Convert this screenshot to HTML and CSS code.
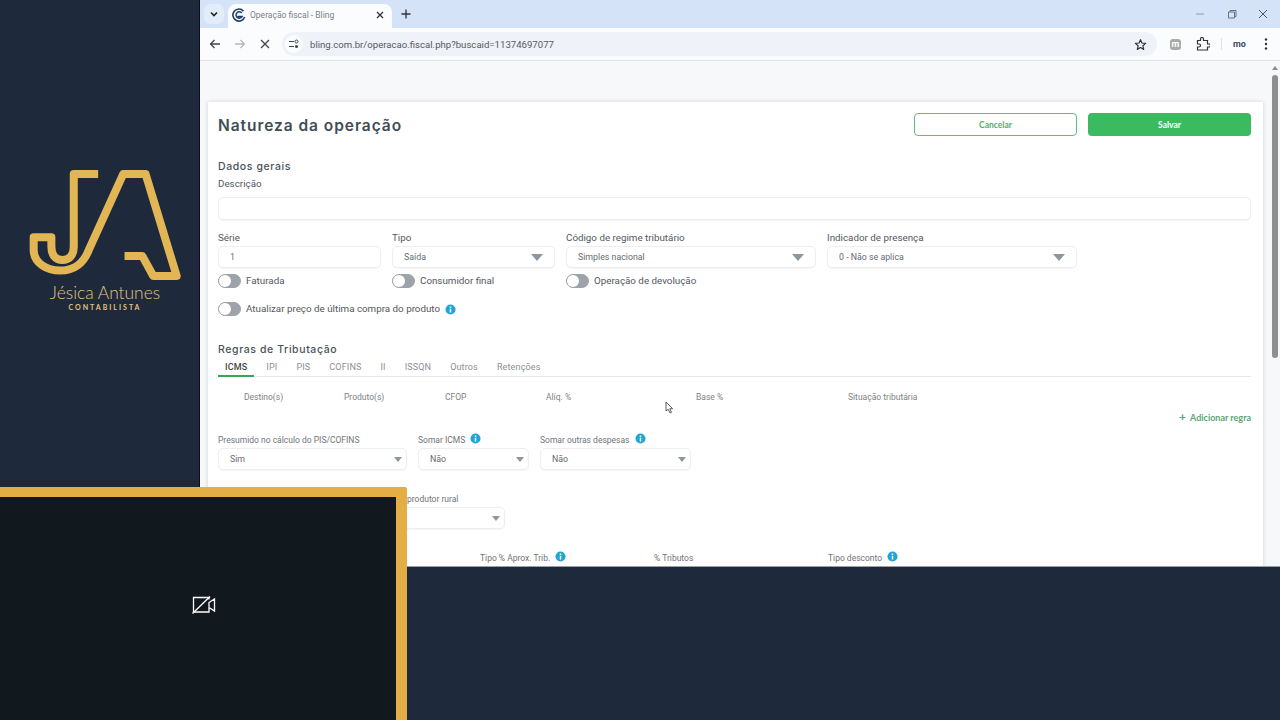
FILE: index.html
```html
<!DOCTYPE html>
<html lang="pt-BR">
<head>
    <meta charset="UTF-8">
    <title>Operação fiscal - Bling</title>
    <link rel="stylesheet" href="styles.css">
</head>
<body>
    <aside class="sidebar">
        <svg class="logo-mark" viewBox="80 55 470 335">
            <path d="M293 73H220V290C220 318 205 330 186 330C165 330 153 315 153 290V262H100V300C100 340 140 362 180 362C220 362 250 340 265 300L368 73H435L528 378H458L425 318H372" fill="none" stroke="#e3b655" stroke-width="24" stroke-linejoin="round"/>
        </svg>
        <div class="logo-name">Jésica Antunes</div>
        <div class="logo-sub">CONTABILISTA</div>
    </aside>

    <div class="browser">
        <div class="tabstrip">
            <div class="tab-menu">
                <svg width="10" height="10" viewBox="0 0 10 10"><path d="M2 3.5L5 6.5L8 3.5" fill="none" stroke="#222" stroke-width="1.6"/></svg>
            </div>
            <div class="tab">
                <svg class="favicon" width="14" height="14" viewBox="0 0 14 14">
                    <path d="M11.5 3.2A6 6 0 1 0 12.6 9" fill="none" stroke="#1d3f66" stroke-width="1.6"/>
                    <path d="M9.8 5A3.2 3.2 0 1 0 10 8.6H5.6" fill="none" stroke="#1d3f66" stroke-width="1.5"/>
                </svg>
                <span class="tab-title">Operação fiscal - Bling</span>
                <svg width="10" height="10" viewBox="0 0 10 10"><path d="M2 2L8 8M8 2L2 8" stroke="#333" stroke-width="1.3"/></svg>
            </div>
            <svg class="new-tab" width="12" height="12" viewBox="0 0 12 12"><path d="M6 1.5V10.5M1.5 6H10.5" stroke="#333" stroke-width="1.3"/></svg>
            <div class="window-controls">
                <svg width="12" height="12" viewBox="0 0 12 12"><path d="M2 6H10" stroke="#8d99a8" stroke-width="1"/></svg>
                <svg width="12" height="12" viewBox="0 0 12 12"><path d="M2.5 4H8.500V10H2.5ZM4 4V2.500H10V8.500H8.500" fill="none" stroke="#67727f" stroke-width="1"/></svg>
                <svg width="12" height="12" viewBox="0 0 12 12"><path d="M2 2L10 10M10 2L2 10" stroke="#4c5662" stroke-width="1"/></svg>
            </div>
        </div>

        <div class="toolbar">
            <svg width="12" height="12" viewBox="0 0 12 12"><path d="M11 6H1.500M5.500 2L1.500 6L5.500 10" fill="none" stroke="#444" stroke-width="1.300"/></svg>
            <svg width="12" height="12" viewBox="0 0 12 12"><path d="M1 6H10.500M6.500 2L10.500 6L6.500 10" fill="none" stroke="#b5b8bc" stroke-width="1.300"/></svg>
            <svg width="12" height="12" viewBox="0 0 12 12"><path d="M2 2L10 10M10 2L2 10" stroke="#444" stroke-width="1.300"/></svg>
            <div class="address-bar">
                <div class="site-icon">
                    <svg width="12" height="12" viewBox="0 0 12 12"><path d="M1 3.500H6M1 8.500H6" stroke="#444" stroke-width="1.200"/><circle cx="8.500" cy="3.500" r="1.500" fill="none" stroke="#444"/><circle cx="8.500" cy="8.500" r="1.500" fill="#444"/></svg>
                </div>
                <span class="url">bling.com.br/operacao.fiscal.php?buscaid=11374697077</span>
                <svg class="star" width="13" height="13" viewBox="0 0 24 24"><path d="M12 3L14.700 9.200L21.500 9.900L16.400 14.400L17.900 21L12 17.600L6.100 21L7.600 14.400L2.500 9.900L9.300 9.200Z" fill="none" stroke="#333" stroke-width="2.200" stroke-linejoin="round"/></svg>
            </div>
            <div class="toolbar-icons">
                <div class="ext-m">m</div>
                <svg width="14" height="14" viewBox="0 0 14 14"><path d="M1.500 3.500H4.500V2A1.500 1.500 0 0 1 7.500 2V3.500H11.500V7H13A1.500 1.500 0 0 1 13 10H11.500V13H1.500V10H3A1.500 1.500 0 0 0 3 7H1.500Z" fill="none" stroke="#333" stroke-width="1.200"/></svg>
                <div class="toolbar-sep"></div>
                <div class="profile">mo</div>
                <svg width="4" height="12" viewBox="0 0 4 12"><circle cx="2" cy="1.500" r="1.200" fill="#333"/><circle cx="2" cy="6" r="1.200" fill="#333"/><circle cx="2" cy="10.500" r="1.200" fill="#333"/></svg>
            </div>
        </div>

        <div class="viewport">
            <main class="page">
                <section class="card">
                    <div class="title-row">
                        <h1>Natureza da operação</h1>
                        <div class="actions">
                            <button class="btn btn-cancel">Cancelar</button>
                            <button class="btn btn-save">Salvar</button>
                        </div>
                    </div>

                    <h2 class="section-general">Dados gerais</h2>
                    <div class="label label-desc">Descrição</div>
                    <div class="input input-desc"></div>

                    <div class="row row-fiscal">
                        <div class="field field-small">
                            <div class="label">Série</div>
                            <div class="input">1</div>
                            <div class="switch-line"><span class="switch"></span>Faturada</div>
                        </div>
                        <div class="field field-small">
                            <div class="label">Tipo</div>
                            <div class="select">Saída<span class="arrow"></span></div>
                            <div class="switch-line"><span class="switch"></span>Consumidor final</div>
                        </div>
                        <div class="field field-wide">
                            <div class="label">Código de regime tributário</div>
                            <div class="select">Simples nacional<span class="arrow"></span></div>
                            <div class="switch-line"><span class="switch"></span>Operação de devolução</div>
                        </div>
                        <div class="field field-wide">
                            <div class="label">Indicador de presença</div>
                            <div class="select">0 - Não se aplica<span class="arrow"></span></div>
                        </div>
                    </div>

                    <div class="switch-line switch-alone">
                        <span class="switch"></span>Atualizar preço de última compra do produto
                        <svg class="info" viewBox="0 0 12 12"><circle cx="6" cy="6" r="5.500" fill="#1fa6d6"/><path d="M5.200 5.200H6.800V9.300H5.200ZM5.200 2.800H6.800V4.300H5.200Z" fill="#fff"/></svg>
                    </div>

                    <h2 class="section-rules">Regras de Tributação</h2>
                    <div class="tabs">
                        <span class="tab-link active">ICMS</span>
                        <span class="tab-link">IPI</span>
                        <span class="tab-link">PIS</span>
                        <span class="tab-link">COFINS</span>
                        <span class="tab-link">II</span>
                        <span class="tab-link">ISSQN</span>
                        <span class="tab-link">Outros</span>
                        <span class="tab-link">Retenções</span>
                    </div>

                    <div class="rule-head">
                        <span>Destino(s)</span>
                        <span>Produto(s)</span>
                        <span>CFOP</span>
                        <span>Alíq. %</span>
                        <span>Base %</span>
                        <span>Situação tributária</span>
                    </div>
                    <div class="add-rule"><span class="plus">+</span>Adicionar regra</div>

                    <div class="row row-calc">
                        <div class="field field-pis">
                            <div class="label label-small">Presumido no cálculo do PIS/COFINS</div>
                            <div class="select">Sim<span class="arrow arrow-small"></span></div>
                        </div>
                        <div class="field field-icms">
                            <div class="label label-small">Somar ICMS
                                <svg class="info" viewBox="0 0 12 12"><circle cx="6" cy="6" r="5.500" fill="#1fa6d6"/><path d="M5.200 5.200H6.800V9.300H5.200ZM5.200 2.800H6.800V4.300H5.200Z" fill="#fff"/></svg>
                            </div>
                            <div class="select">Não<span class="arrow arrow-small"></span></div>
                        </div>
                        <div class="field field-other">
                            <div class="label label-small">Somar outras despesas
                                <svg class="info" viewBox="0 0 12 12"><circle cx="6" cy="6" r="5.500" fill="#1fa6d6"/><path d="M5.200 5.200H6.800V9.300H5.200ZM5.200 2.800H6.800V4.300H5.200Z" fill="#fff"/></svg>
                            </div>
                            <div class="select">Não<span class="arrow arrow-small"></span></div>
                        </div>
                    </div>

                    <div class="field field-rural">
                        <div class="label label-small label-rural">produtor rural</div>
                        <div class="select"><span class="arrow arrow-small"></span></div>
                    </div>

                    <div class="tax-head">
                        <span>Tipo % Aprox. Trib.
                            <svg class="info" viewBox="0 0 12 12"><circle cx="6" cy="6" r="5.500" fill="#1fa6d6"/><path d="M5.200 5.200H6.800V9.300H5.200ZM5.200 2.800H6.800V4.300H5.200Z" fill="#fff"/></svg>
                        </span>
                        <span>% Tributos</span>
                        <span>Tipo desconto
                            <svg class="info" viewBox="0 0 12 12"><circle cx="6" cy="6" r="5.500" fill="#1fa6d6"/><path d="M5.200 5.200H6.800V9.300H5.200ZM5.200 2.800H6.800V4.300H5.200Z" fill="#fff"/></svg>
                        </span>
                    </div>
                </section>
            </main>
            <div class="scrollbar">
                <span class="scroll-up"></span>
                <span class="scroll-thumb"></span>
            </div>
            <svg class="cursor" width="9" height="13" viewBox="0 0 9 13"><path d="M1 1V10L3.200 8.200L5 12L6.500 11.300L4.800 7.700H7.600Z" fill="#fff" stroke="#333" stroke-width="0.800"/></svg>
        </div>
    </div>

    <div class="camera">
        <svg width="24" height="18" viewBox="0 0 24 18">
            <path d="M17 3.500V1.500H1.500V16H17V11.500L22.500 15V3L17 6.500V11.500" fill="none" stroke="#fff" stroke-width="1.300"/>
            <path d="M0.500 17.500L18 0.500" stroke="#fff" stroke-width="1.300"/>
        </svg>
    </div>
</body>
</html>
```

FILE: styles.css
```css
* {
    margin: 0;
    padding: 0;
    box-sizing: border-box;
}

body {
    width: 1280px;
    height: 720px;
    display: flex;
    align-items: flex-start;
    overflow: hidden;
    background-color: #1e2a3c;
    font-family: 'Roboto', 'Liberation Sans', sans-serif;
    color: #4c5157;
}

.sidebar {
    width: 199px;
    flex-shrink: 0;
    padding: 168px 0 0 11px;
    display: flex;
    flex-direction: column;
    align-items: center;
}

.logo-mark {
    width: 157px;
    height: 112px;
}

.logo-name {
    margin-top: 4px;
    font-family: 'Lato', sans-serif;
    font-weight: 300;
    font-size: 17.4px;
    line-height: 18px;
    color: #e6c27c;
}

.logo-sub {
    margin-top: 1px;
    font-family: 'Lato', sans-serif;
    font-weight: 700;
    font-size: 7px;
    line-height: 9px;
    letter-spacing: 2px;
    color: #e6c27c;
}

.browser {
    width: 1081px;
    height: 567px;
    display: flex;
    flex-direction: column;
    overflow: hidden;
    border-left: 1px solid #0c1016;
    border-bottom: 1px solid #9aa0a8;
    background-color: #f6f8fa;
}

/* chrome */
.tabstrip {
    height: 28px;
    flex-shrink: 0;
    display: flex;
    align-items: flex-end;
    background-color: #d5e3f8;
    padding-left: 4px;
}

.tab-menu {
    width: 20px;
    height: 20px;
    margin-bottom: 4px;
    border-radius: 7px;
    background-color: #e3edfa;
    display: flex;
    align-items: center;
    justify-content: center;
}

.tab {
    width: 164px;
    height: 24px;
    margin-left: 4px;
    padding: 0 7px 2px 4px;
    display: flex;
    align-items: center;
    background-color: #fbfcfe;
    border-radius: 8px 8px 0 0;
}

.favicon {
    margin-right: 4px;
}

.tab-title {
    flex: 1;
    font-size: 8.5px;
    color: #7a7f86;
}

.new-tab {
    margin: 0 0 8px 8px;
}

.window-controls {
    margin-left: auto;
    width: 86px;
    padding-right: 11px;
    height: 28px;
    display: flex;
    align-items: center;
    justify-content: space-between;
}

.toolbar {
    height: 33px;
    flex-shrink: 0;
    display: flex;
    align-items: center;
    gap: 13px;
    padding: 0 12px 0 9px;
    background-color: #fbfcfe;
    border-bottom: 1px solid #dfe2e6;
}

.address-bar {
    width: 875px;
    height: 24px;
    margin-left: -2px;
    display: flex;
    align-items: center;
    padding: 0 10px 0 3px;
    border-radius: 12px;
    background-color: #eff3f9;
}

.site-icon {
    width: 18px;
    height: 18px;
    border-radius: 50%;
    background-color: #fbfcfe;
    display: flex;
    align-items: center;
    justify-content: center;
}

.url {
    flex: 1;
    margin-left: 7px;
    font-size: 9.6px;
    color: #55595f;
}

.toolbar-icons {
    flex: 1;
    display: flex;
    align-items: center;
    gap: 11px;
}

.ext-m {
    width: 11px;
    height: 11px;
    margin-right: 4px;
    border-radius: 3px;
    background-color: #a9a9a9;
    color: #fff;
    font-size: 9px;
    font-weight: 700;
    line-height: 10px;
    text-align: center;
}

.toolbar-sep {
    width: 1px;
    height: 12px;
    background-color: #dde1e6;
}

.profile {
    width: 13px;
    margin-right: 7px;
    font-size: 9px;
    font-weight: 700;
    line-height: 10px;
    color: #3b4a5c;
}

/* page */
.viewport {
    flex: 1;
    min-height: 0;
    display: flex;
    position: relative;
}

.page {
    flex: 1;
    padding: 41px 7px 0 8px;
    overflow: hidden;
}

.card {
    height: 600px;
    padding: 11px 12px 0 10px;
    background-color: #fff;
    box-shadow: 0 0 4px rgba(40, 50, 60, 0.18);
}

.title-row {
    height: 23px;
    display: flex;
    align-items: center;
    justify-content: space-between;
}

h1 {
    margin-top: 1px;
    font-family: 'Inter', sans-serif;
    font-size: 15.5px;
    font-weight: 600;
    letter-spacing: 0.95px;
    color: #414d53;
}

.actions {
    display: flex;
    gap: 11px;
}

.btn {
    width: 163px;
    height: 23px;
    border-radius: 4px;
    font-family: 'Lato', sans-serif;
    font-size: 8.5px;
    font-weight: 700;
}

.btn-cancel {
    background-color: #fff;
    border: 1px solid #5cc07d;
    color: #4fae70;
}

.btn-save {
    background-color: #3cba5f;
    border: none;
    color: #fff;
}

h2 {
    font-family: 'Inter', sans-serif;
    font-size: 10.5px;
    font-weight: 500;
    line-height: 16px;
    letter-spacing: 0.6px;
    color: #4a5359;
}

.section-general {
    margin-top: 23px;
}

.section-rules {
    margin-top: 26px;
}

.label {
    height: 14px;
    font-size: 9.800px;
    line-height: 14px;
    color: #53585e;
}

.label-desc {
    margin-top: 2px;
}

.label-small {
    font-size: 8.500px;
    color: #6f747a;
    white-space: nowrap;
}

.input,
.select {
    height: 22px;
    margin-top: 1.500px;
    padding: 0 11px;
    display: flex;
    align-items: center;
    justify-content: space-between;
    border: 1px solid #eceef0;
    border-radius: 5px;
    box-shadow: 0 1px 1px rgba(0, 0, 0, 0.04);
    font-size: 8.800px;
    color: #666b71;
    background-color: #fff;
}

.input-desc {
    height: 23px;
    margin-top: 6px;
}

.arrow {
    width: 0;
    height: 0;
    margin-left: auto;
    border-left: 6.500px solid transparent;
    border-right: 6.500px solid transparent;
    border-top: 7px solid #8f959c;
}

.arrow-small {
    border-left-width: 4px;
    border-right-width: 4px;
    border-top-width: 5px;
    margin-right: -7px;
}

.row {
    display: flex;
}

.row-fiscal {
    margin-top: 10.500px;
    gap: 11px;
}

.row-calc {
    margin-top: 8.500px;
    gap: 11px;
}

.field-small {
    width: 163px;
}

.field-wide {
    width: 250px;
}

.field-pis {
    width: 189px;
}

.field-icms {
    width: 111px;
}

.field-other {
    width: 151px;
}

.field-rural {
    width: 287px;
    margin-top: 21.500px;
}

.label-rural {
    padding-left: 189px;
}

.switch-line {
    height: 14px;
    margin-top: 6px;
    display: flex;
    align-items: center;
    font-size: 9.800px;
    line-height: 14px;
    color: #53585e;
    white-space: nowrap;
}

.switch-alone {
    margin-top: 14px;
}

.switch {
    width: 23px;
    height: 14px;
    margin-right: 5px;
    border-radius: 7px;
    background-color: #9ea3aa;
    border: 1px solid #9ea3aa;
    position: relative;
}

/* knob sits on top of the pill */
.switch::before {
    content: "";
    position: absolute;
    left: 0;
    top: 0;
    width: 12px;
    height: 12px;
    border-radius: 50%;
    background-color: #fff;
}

.info {
    width: 11px;
    height: 11px;
    margin-left: 5px;
}

.label .info,
.tax-head .info {
    margin-left: 3px;
    vertical-align: -1px;
}

.tabs {
    height: 19px;
    display: flex;
    border-bottom: 1px solid #e6e8ea;
    font-size: 9px;
    letter-spacing: 0.15px;
    color: #8a8f95;
}

.tab-link {
    padding: 0 7px;
    margin-right: 5px;
    height: 19px;
    line-height: 18px;
}

.tab-link.active {
    color: #3f4448;
    font-weight: 500;
    border-bottom: 2px solid #34a853;
}

.rule-head {
    margin-top: 13px;
    padding-left: 26px;
    display: grid;
    grid-template-columns: 100px 101px 101px 150px 152px 1fr;
    font-size: 8.500px;
    line-height: 14px;
    color: #7d8288;
}

.add-rule {
    margin-top: 6px;
    height: 14px;
    text-align: right;
    font-family: 'Lato', sans-serif;
    font-size: 9px;
    font-weight: 700;
    line-height: 14px;
    color: #5ba675;
}

.plus {
    font-size: 12px;
    margin-right: 4px;
}

.tax-head {
    margin-top: 22px;
    padding-left: 262px;
    display: grid;
    grid-template-columns: 174px 174px 1fr;
    font-size: 8.500px;
    line-height: 14px;
    color: #6f747a;
}

.scrollbar {
    width: 10px;
    flex-shrink: 0;
    padding-top: 5px;
    display: flex;
    flex-direction: column;
    align-items: center;
    gap: 5px;
    background-color: #f6f8fa;
}

.scroll-up {
    width: 0;
    height: 0;
    border-left: 3px solid transparent;
    border-right: 3px solid transparent;
    border-bottom: 4px solid #8a8a8a;
}

.scroll-thumb {
    width: 6px;
    height: 283px;
    border-radius: 3px;
    background-color: #8f8f8f;
}

.cursor {
    position: absolute;
    left: 465px;
    top: 340px;
}

/* webcam panel lies over the page */
.camera {
    position: absolute;
    left: 0;
    top: 487px;
    width: 407px;
    height: 233px;
    padding: 0 0 8px 11px;
    display: flex;
    align-items: center;
    justify-content: center;
    background-color: #11191f;
    border-top: 10px solid #e3ae45;
    border-right: 11px solid #e3ae45;
    border-top-right-radius: 3px;
}
```
